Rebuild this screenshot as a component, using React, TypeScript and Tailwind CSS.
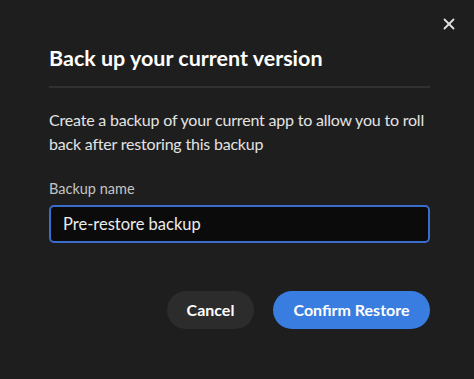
import { X } from "lucide-react";

export default function App() {
  return (
    <div
      className="relative h-[379px] w-[474px] bg-[#1e1e1e] text-white"
      style={{ fontFamily: "Lato, 'Noto Sans', sans-serif" }}
    >
      <button className="absolute right-[16px] top-[15px] text-[#e0e0e0]">
        <X size={18} strokeWidth={2.4} />
      </button>
      <div className="pl-[49px] pr-[44px] pt-[44px]">
        <h2 className="text-[21.5px] font-bold leading-[28px] text-white">Back up your current version</h2>
        <div className="mt-[14px] h-[2px] w-full bg-[#303030]" />
        <p className="mt-[20px] text-[16px] leading-[24px] tracking-[-0.2px] text-[#e3e3e3]">
          Create a backup of your current app to allow you to roll back after restoring this backup
        </p>
        <label className="mt-[24px] block text-[14.5px] leading-[18px] text-[#c4c4c4]">Backup name</label>
        <div className="mt-[7px] flex h-[38px] items-center rounded-[5px] border-2 border-[#3a6ccb] bg-[#0b0b0b] px-[12px] text-[16.5px] text-[#ececec]">
          Pre-restore backup
        </div>
        <div className="mt-[48px] flex justify-end gap-[19px]">
          <button className="h-[38px] w-[87px] rounded-full bg-[#2c2c2c] text-[16px] font-bold text-white">
            Cancel
          </button>
          <button className="h-[38px] w-[157px] rounded-full bg-[#3a7de0] text-[16px] font-bold text-white">
            Confirm Restore
          </button>
        </div>
      </div>
    </div>
  );
}
